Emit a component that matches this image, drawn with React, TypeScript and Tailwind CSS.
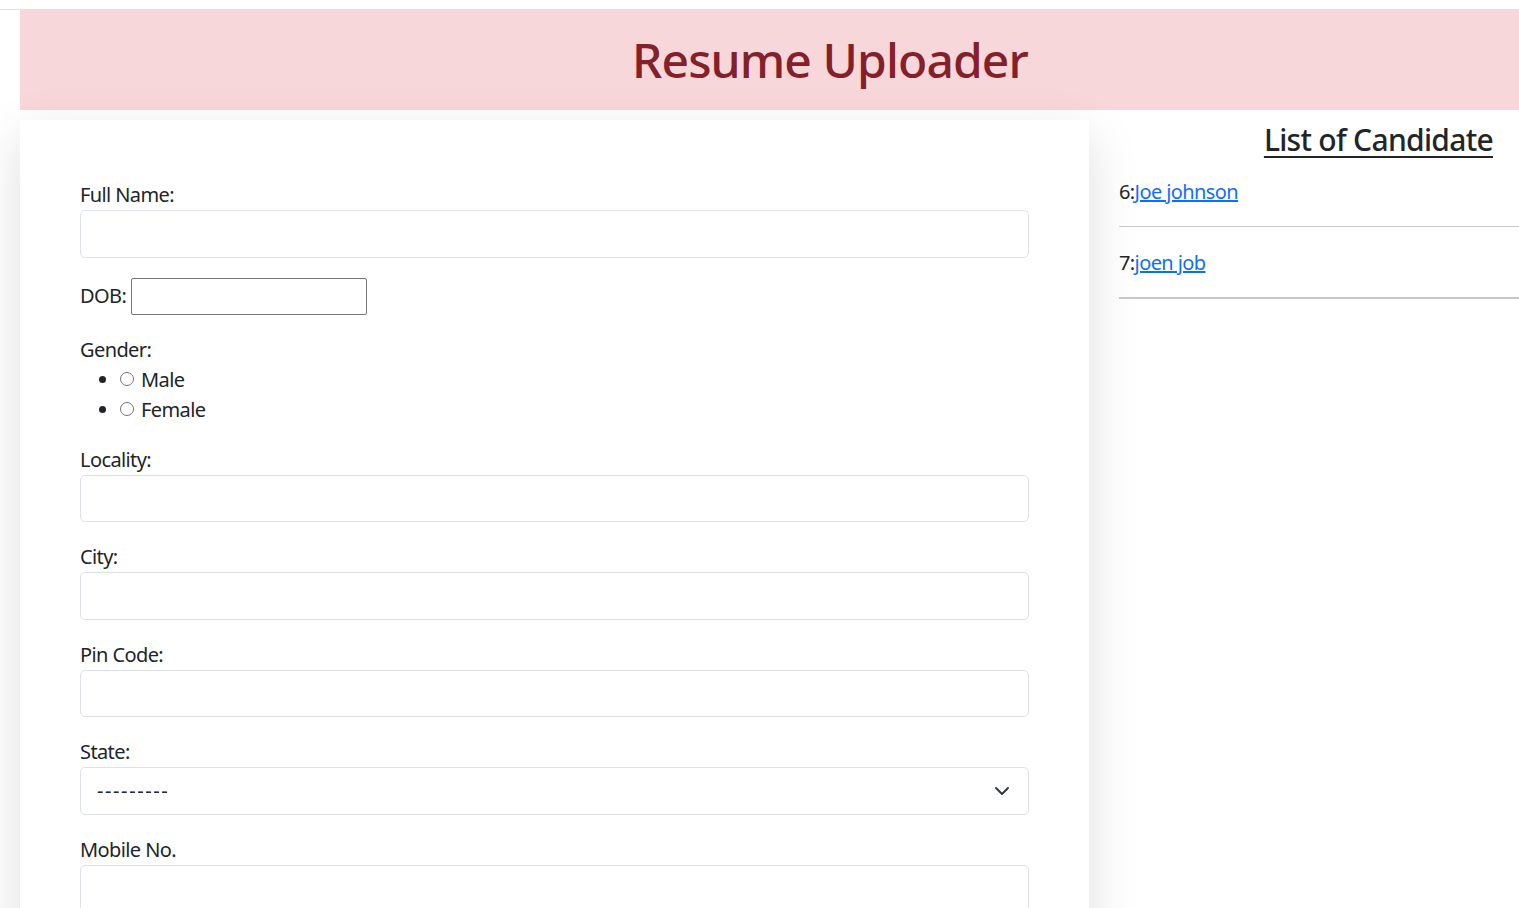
import React from "react";

const font = { fontFamily: '"Noto Sans", "Open Sans", sans-serif' };

function Field({ label, select }: { label: string; select?: boolean }) {
  return (
    <div className="mb-[20px]">
      <div className="h-[30px] leading-[30px]">{label}</div>
      {select ? (
        <div className="flex h-[47.5px] items-center justify-between rounded-[5px] border border-[#dee2e6] bg-white pl-[16px] pr-[18px]">
          <span className="text-[20px] tracking-[1.6px]">---------</span>
          <svg width="16" height="16" viewBox="0 0 16 16" fill="none">
            <path d="M2 5l6 6 6-6" stroke="#343a40" strokeWidth="2" strokeLinecap="round" strokeLinejoin="round" />
          </svg>
        </div>
      ) : (
        <div className="h-[47.5px] rounded-[5px] border border-[#dee2e6] bg-white" />
      )}
    </div>
  );
}

function Radio({ label }: { label: string }) {
  return (
    <li className="h-[30px] leading-[30px]">
      <span className="inline-flex items-center">
        <span className="mr-[7px] inline-block h-[14px] w-[14px] -translate-y-[1px] rounded-full border border-[#767676]" />
        {label}
      </span>
    </li>
  );
}

export default function App() {
  return (
    <div className="min-h-screen overflow-x-hidden bg-white text-[20px] tracking-[-0.6px] text-[#212529]" style={font}>
      <div className="h-[9px]" />
      <div className="border-t border-[#dee2e6]">
        <div className="ml-[20px] flex h-[100px] w-[1620px] items-center justify-center bg-[#f8d7da]">
          <h1 className="text-[48px] font-medium leading-[60px] tracking-[-0.9px] text-[#842029]">Resume Uploader</h1>
        </div>
      </div>
      <div className="mt-[10px] flex">
        <div className="ml-[20px] w-[1069px] shrink-0 bg-white px-[60px] pb-[40px] pt-[60px] shadow-[0_16px_48px_rgba(0,0,0,0.13)]">
          <Field label="Full Name:" />
          <div className="mb-[20px] flex h-[37px] items-center">
            <span className="mr-[5px]">DOB:</span>
            <div className="h-[37px] w-[236px] rounded-[2px] border border-[#767676]" />
          </div>
          <div className="h-[30px] leading-[30px]">Gender:</div>
          <ul className="mb-[20px] list-disc pl-[40px]">
            <Radio label="Male" />
            <Radio label="Female" />
          </ul>
          <Field label="Locality:" />
          <Field label="City:" />
          <Field label="Pin Code:" />
          <Field label="State:" select />
          <Field label="Mobile No." />
        </div>
        <div className="ml-[30px] flex-1">
          <div className="pr-[26px] text-right">
            <h4 className="text-[30px] font-medium leading-[40px] tracking-[-0.7px] underline decoration-[2px] underline-offset-[5px]">
              List of Candidate
            </h4>
          </div>
          <div className="mt-[17px] h-[30px] leading-[30px]">
            6:<a href="#" className="text-[#0d6efd] underline">Joe johnson</a>
          </div>
          <hr className="mb-[21px] mt-[19px] border-t border-[#c8c8c8]" />
          <div className="h-[30px] leading-[30px]">
            7:<a href="#" className="text-[#0d6efd] underline">joen job</a>
          </div>
          <hr className="mt-[19px] border-t-2 border-[#c8c8c8]" />
        </div>
      </div>
    </div>
  );
}
